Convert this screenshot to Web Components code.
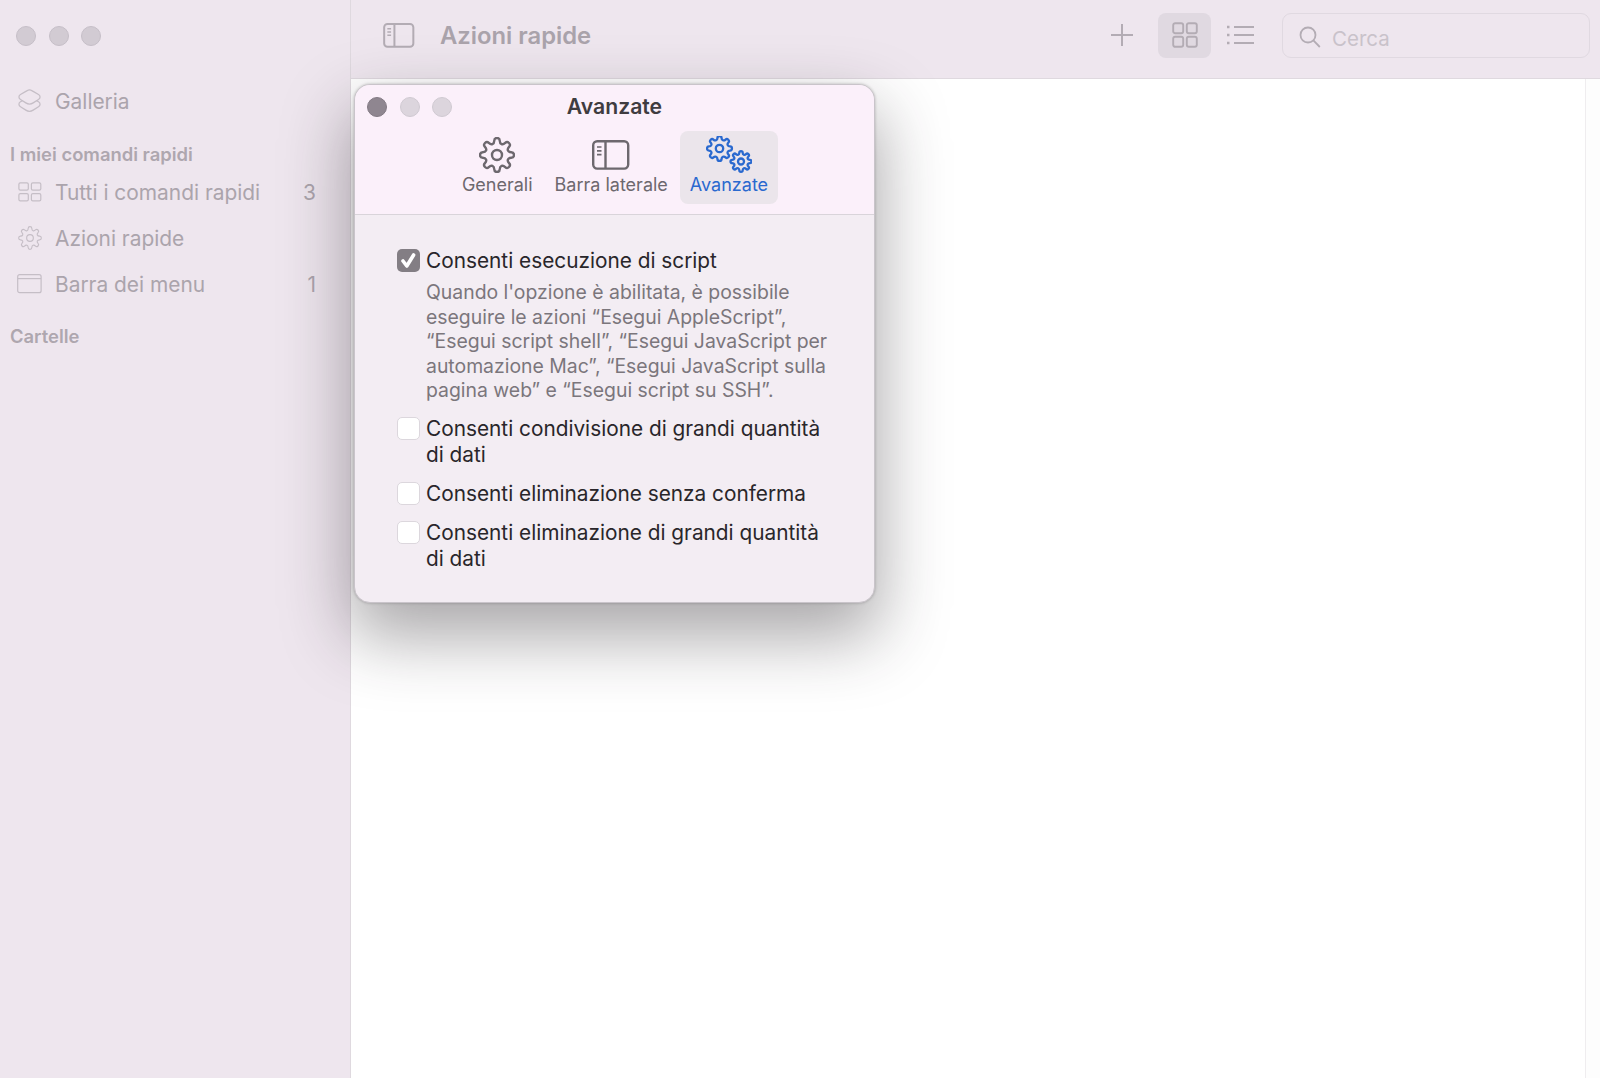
<!DOCTYPE html>
<html lang="it">
<head>
<meta charset="utf-8">
<title>Azioni rapide</title>
<style>
html, body { margin: 0; height: 100%; background: #fff; overflow: hidden; }
body { font-family: Inter, "Liberation Sans", sans-serif; }
</style>
</head>
<body>
<app-window>
  <side-bar slot="side">
    <side-item icon="layers" style="margin-top:39px">Galleria</side-item>
    <side-heading style="margin-top:26px">I miei comandi rapidi</side-heading>
    <side-item icon="grid" count="3" style="margin-top:11px">Tutti i comandi rapidi</side-item>
    <side-item icon="gear" style="margin-top:14px">Azioni rapide</side-item>
    <side-item icon="window" count="1" style="margin-top:14px">Barra dei menu</side-item>
    <side-heading style="margin-top:25px">Cartelle</side-heading>
  </side-bar>
  <tool-bar slot="bar" heading="Azioni rapide"></tool-bar>
  <prefs-dialog slot="dialog" heading="Avanzate">
    <pref-tab slot="tabs" icon="gear" label="Generali"></pref-tab>
    <pref-tab slot="tabs" icon="sidebar" label="Barra laterale"></pref-tab>
    <pref-tab slot="tabs" icon="gears" label="Avanzate" active></pref-tab>
    <pref-check checked>Consenti esecuzione di script
      <span slot="note">Quando l'opzione è abilitata, è possibile<br>eseguire le azioni “Esegui AppleScript”,<br>“Esegui script shell”, “Esegui JavaScript per<br>automazione Mac”, “Esegui JavaScript sulla<br>pagina web” e “Esegui script su SSH”.</span>
    </pref-check>
    <pref-check>Consenti condivisione di grandi quantità<br>di dati</pref-check>
    <pref-check>Consenti eliminazione senza conferma</pref-check>
    <pref-check>Consenti eliminazione di grandi quantità<br>di dati</pref-check>
  </prefs-dialog>
</app-window>

<script>
// gear outline with rounded teeth, used by the sidebar and the tabs
function gearPath(cx, cy, ro, ri, teeth) {
  const pts = [];
  const step = Math.PI * 2 / teeth;
  for (let i = 0; i < teeth; i++) {
    const a = i * step - Math.PI / 2;
    const w = step * 0.2;
    const w2 = step * 0.3;
    pts.push([cx + ri * Math.cos(a - w2), cy + ri * Math.sin(a - w2)]);
    pts.push([cx + ro * Math.cos(a - w), cy + ro * Math.sin(a - w)]);
    pts.push([cx + ro * Math.cos(a + w), cy + ro * Math.sin(a + w)]);
    pts.push([cx + ri * Math.cos(a + w2), cy + ri * Math.sin(a + w2)]);
  }
  const mid = (p, q) => ((p[0] + q[0]) / 2).toFixed(2) + " " + ((p[1] + q[1]) / 2).toFixed(2);
  let d = "M" + mid(pts[pts.length - 1], pts[0]);
  pts.forEach((p, i) => {
    d += "Q" + p[0].toFixed(2) + " " + p[1].toFixed(2) + " " + mid(p, pts[(i + 1) % pts.length]);
  });
  return d + "Z";
}

function gearSvg(size, sw) {
  return `<svg width="${size}" height="${size}" viewBox="0 0 36 36" fill="none" stroke="currentColor" stroke-width="${sw}" stroke-linejoin="round">
    <path d="${gearPath(18, 18, 17.2, 12, 8)}"/><circle cx="18" cy="18" r="5"/></svg>`;
}

const icons = {
  layers: `<svg width="23" height="24" viewBox="0 0 22 22.5" fill="none" stroke="currentColor" stroke-width="1.2" stroke-linejoin="round" preserveAspectRatio="none">
    <path d="M11 .8C12 .8 13 1.4 14.5 2.2L19.6 5.2C21.6 6.4 21.6 8.6 19.6 9.8L14.5 13C12.4 14.4 9.6 14.4 7.5 13L2.4 9.8C.4 8.6 .4 6.4 2.4 5.2L7.5 2.2C9 1.4 10 .8 11 .8Z"/>
    <path d="M4.2 10.9L2.4 12C.4 13.2 .4 15.4 2.4 16.6L7.5 19.8C9.6 21.2 12.4 21.2 14.5 19.8L19.6 16.6C21.6 15.4 21.6 13.2 19.6 12L17.8 10.9"/></svg>`,
  grid: `<svg width="24" height="20" viewBox="0 0 24 20" fill="none" stroke="currentColor" stroke-width="1.2">
    <rect x=".9" y=".9" width="9.4" height="7.2" rx="1.4"/><rect x="13.4" y=".9" width="9.4" height="7.2" rx="1.4"/>
    <rect x=".9" y="11.6" width="9.4" height="7.2" rx="1.4"/><rect x="13.4" y="11.6" width="9.4" height="7.2" rx="1.4"/></svg>`,
  gear: gearSvg(24, 1.7),
  window: `<svg width="25" height="20" viewBox="0 0 25 20" fill="none" stroke="currentColor" stroke-width="1.2">
    <rect x=".7" y=".7" width="23.4" height="18" rx="2"/><path d="M.7 4.6h23.4"/></svg>`,
  sidebar: `<svg width="38" height="30" viewBox="0 0 38 30" fill="none" stroke="currentColor" stroke-width="2.4">
    <rect x="1.2" y="1.2" width="35" height="27.4" rx="4"/><path d="M13.5 1.2v27.4"/>
    <path d="M5 7h4.5M5 10.8h4.5M5 14.6h4.5" stroke-width="1.7"/></svg>`,
  gears: `<svg width="46" height="38" viewBox="0 0 46 38" fill="none" stroke="currentColor" stroke-width="2.3" stroke-linejoin="round">
    <path d="${gearPath(13.5, 12.5, 12.6, 9, 8)}"/><circle cx="13.5" cy="12.5" r="3.7"/>
    <path d="${gearPath(35, 25.5, 10.6, 7.4, 8)}"/><circle cx="35" cy="25.5" r="3"/></svg>`
};

class TrafficLights extends HTMLElement {
  constructor() {
    super();
    this.attachShadow({ mode: "open" });
    this.shadowRoot.innerHTML = `
      <style>
        :host { display: flex; gap: var(--light-gap, 12.5px); }
        i { width: 20px; height: 20px; border-radius: 50%; box-sizing: border-box;
            background: var(--light, #d2cbd3); border: 1px solid var(--light-edge, #c6bfc8); }
        i:first-of-type { background: var(--light-first, var(--light, #d2cbd3)); border-color: var(--light-first-edge, var(--light-edge, #c6bfc8)); }
      </style>
      <i></i><i></i><i></i>`;
  }
}
customElements.define("traffic-lights", TrafficLights);

class AppWindow extends HTMLElement {
  constructor() {
    super();
    this.attachShadow({ mode: "open" });
    this.shadowRoot.innerHTML = `
      <style>
        :host { display: flex; position: relative; height: 1078px; width: 1600px; overflow: hidden; background: #fff; }
        .main { flex: 1; display: flex; flex-direction: column; min-width: 0; }
        .content { flex: 1; display: flex; justify-content: flex-end; }
        .track { width: 14px; background: #fdfdfd; border-left: 1px solid #efedef; }
        ::slotted([slot="dialog"]) { position: absolute; left: 354px; top: 84px; }
      </style>
      <slot name="side"></slot>
      <div class="main">
        <slot name="bar"></slot>
        <div class="content"><div class="track"></div></div>
      </div>
      <slot name="dialog"></slot>`;
  }
}
customElements.define("app-window", AppWindow);

class SideBar extends HTMLElement {
  constructor() {
    super();
    this.attachShadow({ mode: "open" });
    this.shadowRoot.innerHTML = `
      <style>
        :host { display: block; width: 351px; box-sizing: border-box; flex: none; background: #eee6ee;
                border-right: 1px solid #dfd9df; padding: 26px 0 0 0; }
        traffic-lights { margin-left: 16px; }
      </style>
      <traffic-lights></traffic-lights>
      <slot></slot>`;
  }
}
customElements.define("side-bar", SideBar);

class SideItem extends HTMLElement {
  constructor() {
    super();
    this.attachShadow({ mode: "open" });
    const count = this.getAttribute("count");
    this.shadowRoot.innerHTML = `
      <style>
        :host { display: flex; align-items: center; height: 32px; padding: 0 34px 0 17px;
                font-size: 20.9px; color: #aba4ac; }
        .icon { width: 25px; display: flex; justify-content: center; margin-right: 13px; color: #c5bec6; }
        .name { flex: 1; }
      </style>
      <span class="icon">${icons[this.getAttribute("icon")]}</span>
      <span class="name"><slot></slot></span>
      ${count ? `<span>${count}</span>` : ""}`;
  }
}
customElements.define("side-item", SideItem);

class SideHeading extends HTMLElement {
  constructor() {
    super();
    this.attachShadow({ mode: "open" });
    this.shadowRoot.innerHTML = `
      <style>
        :host { display: block; padding-left: 10px; font-size: 18.4px; line-height: 22px; font-weight: 600; color: #aea7af; }
      </style>
      <slot></slot>`;
  }
}
customElements.define("side-heading", SideHeading);

class ToolBar extends HTMLElement {
  constructor() {
    super();
    this.attachShadow({ mode: "open" });
    this.shadowRoot.innerHTML = `
      <style>
        :host { display: flex; align-items: center; height: 79px; box-sizing: border-box; flex: none;
                padding: 0 10px 8px 32px; background: #eee6ee; border-bottom: 1px solid #dfd9df; color: #aba4ac; }
        h1 { margin: 0 0 0 25px; font-size: 23.8px; font-weight: 600; flex: 1; color: #aaa3ab; }
        .icon { display: flex; color: #b3acb4; }
        .plus { margin-right: 24px; }
        .pressed { width: 53px; height: 45px; border-radius: 8px; background: #e0d9e1;
                   display: flex; align-items: center; justify-content: center; margin-right: 15px; }
        .list { margin-right: 28px; }
        .search { width: 308px; height: 45px; box-sizing: border-box; border: 1.5px solid #e0d9e1; border-radius: 9px;
                  display: flex; align-items: center; padding-left: 16px; gap: 11px; font-size: 20.5px; color: #c9c2ca; }
        .search svg { margin-top: 3px; }
        .search span { margin-top: 6px; }
      </style>
      <span class="icon"><svg width="32" height="25" viewBox="0 0 38 30" fill="none" stroke="currentColor" stroke-width="2.4">
        <rect x="1.2" y="1.2" width="35" height="27.4" rx="4"/><path d="M13.5 1.2v27.4"/>
        <path d="M5 7h4.5M5 10.8h4.5M5 14.6h4.5" stroke-width="1.8"/></svg></span>
      <h1>${this.getAttribute("heading")}</h1>
      <span class="icon plus"><svg width="24" height="24" viewBox="0 0 24 24" stroke="currentColor" stroke-width="2"><path d="M12 1v22M1 12h22"/></svg></span>
      <span class="pressed icon"><svg width="26" height="26" viewBox="0 0 26 26" fill="none" stroke="currentColor" stroke-width="1.9">
        <rect x="1.2" y="1.2" width="10" height="10" rx="2"/><rect x="14.8" y="1.2" width="10" height="10" rx="2"/>
        <rect x="1.2" y="14.8" width="10" height="10" rx="2"/><rect x="14.8" y="14.8" width="10" height="10" rx="2"/></svg></span>
      <span class="icon list"><svg width="28" height="20" viewBox="0 0 28 20" fill="none" stroke="currentColor" stroke-width="1.8">
        <path d="M8 2h20M8 10h20M8 18h20"/><path d="M1 2h2.5M1 10h2.5M1 18h2.5" stroke-width="2.6"/></svg></span>
      <div class="search">
        <svg width="22" height="22" viewBox="0 0 22 22" fill="none" stroke="#b3acb4" stroke-width="1.8"><circle cx="9" cy="9" r="7.5"/><path d="M14.4 14.4l6.4 6.6"/></svg>
        <span>Cerca</span>
      </div>`;
  }
}
customElements.define("tool-bar", ToolBar);

class PrefsDialog extends HTMLElement {
  constructor() {
    super();
    this.attachShadow({ mode: "open" });
    this.shadowRoot.innerHTML = `
      <style>
        :host { display: block; width: 521px; box-sizing: border-box; border-radius: 16px; overflow: visible;
                background: #f3edf3; border: 1px solid #c9c4ca;
                box-shadow: 0 0 3px rgba(0,0,0,.25), 0 30px 68px 4px rgba(40,35,40,.4); color: #2a272b; }
        header { height: 130px; box-sizing: border-box; background: #fbf0fa; border-bottom: 1.5px solid #d9d4da;
                 border-radius: 15px 15px 0 0; position: relative; padding-top: 46px; }
        traffic-lights { position: absolute; left: 12px; top: 12px; --light: #dcd5dd; --light-edge: #d0cad2;
                         --light-first: #8f8690; --light-first-edge: #837a84; }
        h2 { position: absolute; left: 0; right: 0; top: 8px; margin: 0; text-align: center;
             font-size: 21.2px; line-height: 26px; font-weight: 600; color: #3f3c40; }
        .tabs { display: flex; justify-content: center; gap: 2px; padding-left: 1px; }
        .body { padding: 33px 30px 24px 42px; display: flex; flex-direction: column; gap: 7px; }
      </style>
      <header>
        <traffic-lights></traffic-lights>
        <h2>${this.getAttribute("heading")}</h2>
        <div class="tabs"><slot name="tabs"></slot></div>
      </header>
      <div class="body"><slot></slot></div>`;
  }
}
customElements.define("prefs-dialog", PrefsDialog);

class PrefTab extends HTMLElement {
  constructor() {
    super();
    this.attachShadow({ mode: "open" });
    this.shadowRoot.innerHTML = `
      <style>
        :host { display: flex; flex-direction: column; align-items: center; height: 73px; box-sizing: border-box;
                padding: 4px 10px 0; border-radius: 8px; font-size: 18px; color: #6d686e; }
        :host([active]) { background: #ebe5eb; color: #2a69cf; }
        .icon { height: 40px; display: flex; align-items: center; justify-content: center; }
        span.label { line-height: 24px; margin-top: -2px; white-space: nowrap; }
      </style>
      <span class="icon">${this.getAttribute("icon") === "gear" ? gearSvg(36, 2.4) : icons[this.getAttribute("icon")]}</span>
      <span class="label">${this.getAttribute("label")}</span>`;
  }
}
customElements.define("pref-tab", PrefTab);

class PrefCheck extends HTMLElement {
  constructor() {
    super();
    this.attachShadow({ mode: "open" });
    const mark = this.hasAttribute("checked")
      ? `<svg width="23" height="23" viewBox="0 0 23 23" fill="none" stroke="#fff" stroke-width="3.6" stroke-linecap="round" stroke-linejoin="round"><path d="M6 12l3.8 5 6.8-11"/></svg>`
      : "";
    this.shadowRoot.innerHTML = `
      <style>
        :host { display: flex; gap: 6px; font-size: 20.8px; line-height: 26px; color: #29262a; }
        .box { flex: none; width: 23px; height: 23px; box-sizing: border-box; border-radius: 5px; margin-top: 1px;
               background: #fff; border: 1px solid #dcd7dd; }
        :host([checked]) .box { background: #837e84; border: none; }
        .note { display: block; font-size: 19.4px; line-height: 24.5px; color: #7b767c; margin: 6px 0; }
      </style>
      <span class="box">${mark}</span>
      <div><slot></slot><div class="note"><slot name="note"></slot></div></div>`;
  }
}
customElements.define("pref-check", PrefCheck);
</script>
</body>
</html>
